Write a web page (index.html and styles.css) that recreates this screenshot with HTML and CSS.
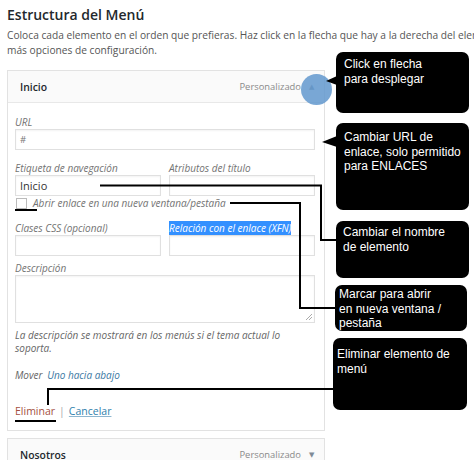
FILE: index.html
```html
<!DOCTYPE html>
<html lang="es">
<head>
<meta charset="utf-8">
<title>Estructura del Menú</title>
<link rel="stylesheet" href="styles.css">
</head>
<body>
<div class="page">
  <h2 class="title">Estructura del Menú</h2>
  <p class="intro">Coloca cada elemento en el orden que prefieras. Haz click en la flecha que hay a la derecha del elemento para mostrar<br>más opciones de configuración.</p>

  <div class="item">
    <div class="bar">
      <span class="name">Inicio</span>
      <span class="type">Personalizado</span>
      <span class="arrow">▲</span>
    </div>
    <div class="settings">
      <div class="field">
        <label class="lbl">URL</label>
        <div class="input small">#</div>
      </div>
      <div class="row">
        <div class="field">
          <label class="lbl">Etiqueta de navegación</label>
          <div class="input">Inicio</div>
        </div>
        <div class="field">
          <label class="lbl">Atributos del título</label>
          <div class="input"></div>
        </div>
      </div>
      <div class="check"><span class="box"></span><span class="lbl">Abrir enlace en una nueva ventana/pestaña</span></div>
      <div class="row">
        <div class="field">
          <label class="lbl">Clases CSS (opcional)</label>
          <div class="input"></div>
        </div>
        <div class="field">
          <label class="lbl"><span class="sel">Relación con el enlace (XFN)</span></label>
          <div class="input"></div>
        </div>
      </div>
      <div class="field desc">
        <label class="lbl">Descripción</label>
        <div class="textarea"><span class="grip"></span></div>
      </div>
      <p class="help">La descripción se mostrará en los menús si el tema actual lo<br>soporta.</p>
      <p class="move">Mover <a class="link">Uno hacia abajo</a></p>
      <div class="actions"><a class="del">Eliminar</a><span class="sep">|</span><a class="cancel">Cancelar</a></div>
    </div>
  </div>

  <div class="item closed">
    <div class="bar">
      <span class="name">Nosotros</span>
      <span class="type">Personalizado</span>
      <span class="arrow">▼</span>
    </div>
  </div>
</div>

<div class="spot"></div>

<svg class="wires" width="474" height="460" viewBox="0 0 474 460">
  <polygon points="337,76 326,81 337,85" fill="#000"/>
  <polygon points="337,136 322,142 337,147" fill="#000"/>
  <polyline points="100,185.5 321,185.5 321,240 337,240" fill="none" stroke="#000" stroke-width="2"/>
  <polyline points="230,203 300,203 300,308 336,308" fill="none" stroke="#000" stroke-width="2"/>
  <line x1="15" y1="210" x2="37" y2="210" stroke="#000" stroke-width="2"/>
  <polyline points="48,405 48,389 334,389" fill="none" stroke="#000" stroke-width="2"/>
  <line x1="15" y1="421" x2="56" y2="421" stroke="#000" stroke-width="2"/>
</svg>

<div class="callout c1">Click en flecha<br>para desplegar</div>
<div class="callout c2">Cambiar URL de<br>enlace, solo permitido<br>para ENLACES</div>
<div class="callout c3">Cambiar el nombre<br>de elemento</div>
<div class="callout c4">Marcar para abrir<br>en nueva ventana /<br>pestaña</div>
<div class="callout c5">Eliminar elemento de<br>menú</div>
</body>
</html>
```

FILE: styles.css
```css
html, body {
  margin: 0;
  padding: 0;
}

body {
  width: 474px;
  height: 460px;
  overflow: hidden;
  position: relative;
  background: #fff;
  font-family: "Open Sans", "DejaVu Sans", sans-serif;
  color: #444;
}

.page {
  padding: 6px 0 0 7px;
}

.title {
  margin: 0;
  font-size: 14px;
  line-height: 18px;
  font-weight: 600;
  color: #23282d;
}

.intro {
  margin: 4px 0 0;
  width: 467px;
  overflow: hidden;
  font-size: 10.2px;
  line-height: 15px;
  color: #555;
  white-space: nowrap;
}

.item {
  width: 318px;
  box-sizing: border-box;
  border: 1px solid #e2e2e2;
  margin-top: 12px;
  background: #fff;
}

.item.closed {
  margin-top: 7px;
}

.bar {
  height: 31px;
  display: flex;
  align-items: center;
  padding: 0 7px 0 12px;
  background: #fafafa;
  border-bottom: 1px solid #e8e8e8;
}

.bar .name {
  flex: 1;
  font-size: 10.4px;
  font-weight: 600;
  color: #23282d;
}

.bar .type {
  font-size: 9.4px;
  color: #8a8a8a;
}

.bar .arrow {
  font-size: 7px;
  color: #7f8a96;
  margin-left: 8px;
  width: 8px;
}

.settings {
  padding: 12px 9px 11px 7px;
}

.lbl {
  display: block;
  font-size: 10px;
  line-height: 14px;
  font-style: italic;
  color: #737373;
}

.input {
  height: 21px;
  box-sizing: border-box;
  border: 1px solid #e0e0e0;
  box-shadow: inset 0 1px 2px rgba(0, 0, 0, 0.05);
  font-size: 11px;
  line-height: 19px;
  padding: 0 4px;
  color: #333;
}

.input.small {
  font-size: 9.5px;
  color: #777;
}

.row {
  display: grid;
  grid-template-columns: 1fr 1fr;
  column-gap: 8px;
  margin-top: 11px;
}

.check {
  display: flex;
  align-items: center;
  gap: 6px;
  height: 14px;
  padding-left: 1px;
}

.check .box {
  width: 11px;
  height: 11px;
  box-sizing: border-box;
  border: 1px solid #bbb;
  background: #fff;
}

.sel {
  background: #3390ff;
  color: #fff;
}

.desc {
  margin-top: 5px;
}

.textarea {
  height: 48px;
  box-sizing: border-box;
  border: 1px solid #e0e0e0;
  box-shadow: inset 0 1px 2px rgba(0, 0, 0, 0.05);
  position: relative;
}

.grip {
  position: absolute;
  right: 2px;
  bottom: 2px;
  width: 6px;
  height: 6px;
  background: linear-gradient(135deg, transparent 45%, #aaa 45%, #aaa 55%, transparent 55%, transparent 70%, #aaa 70%, #aaa 80%, transparent 80%);
}

.help {
  margin: 6px 0 0;
  font-size: 10px;
  line-height: 13px;
  font-style: italic;
  color: #666;
}

.move {
  margin: 13px 0 0;
  font-size: 10px;
  line-height: 14px;
  font-style: italic;
  color: #666;
}

.link {
  color: #3b79a3;
  margin-left: 2px;
}

.actions {
  margin-top: 21px;
  font-size: 10.5px;
  line-height: 16px;
}

.del {
  color: #a5503f;
}

.sep {
  color: #aaa;
  margin: 0 4px;
}

.cancel {
  color: #2f7fad;
  text-decoration: underline;
  text-decoration-color: #8db6cf;
}

.spot {
  position: absolute;
  left: 301px;
  top: 74px;
  width: 31px;
  height: 31px;
  border-radius: 50%;
  background: rgba(98, 152, 206, 0.85);
}

.wires {
  position: absolute;
  left: 0;
  top: 0;
}

.callout {
  position: absolute;
  box-sizing: border-box;
  background: #000;
  color: #fff;
  border-radius: 7px;
  font-family: "Liberation Sans", Arial, sans-serif;
  font-size: 12px;
  line-height: 14.5px;
}

.c1 {
  left: 336px;
  top: 52px;
  width: 133px;
  height: 61px;
  padding: 5px 6px 0 8px;
}

.c2 {
  left: 336px;
  top: 123px;
  width: 133px;
  height: 87px;
  padding: 7px 4px 0 8px;
}

.c3 {
  left: 336px;
  top: 221px;
  width: 133px;
  height: 57px;
  padding: 4px 4px 0 7px;
}

.c4 {
  left: 335px;
  top: 285px;
  width: 132px;
  height: 46px;
  padding: 2px 4px 0 4px;
}

.c5 {
  left: 333px;
  top: 338px;
  width: 134px;
  height: 72px;
  padding: 9px 4px 0 4px;
}
```
